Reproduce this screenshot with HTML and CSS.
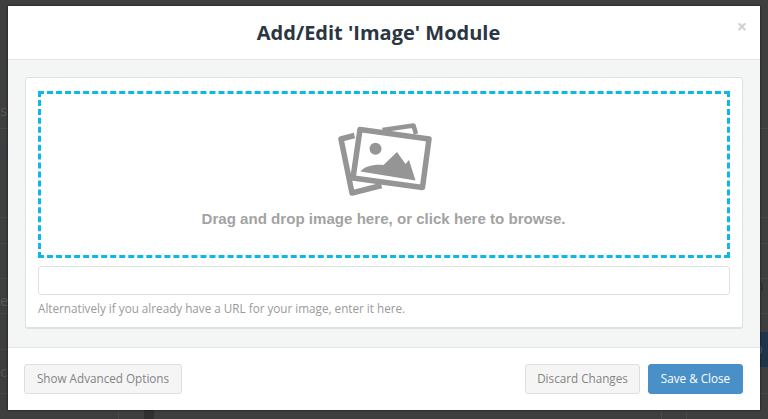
FILE: index.html
```html
<!DOCTYPE html>
<html lang="en">
<head>
  <meta charset="UTF-8">
  <title>Add/Edit 'Image' Module</title>
  <link rel="stylesheet" href="styles.css">
</head>
<body>
  <div class="backdrop">
    <i class="bg-line l1"></i>
    <i class="bg-line l2"></i>
    <i class="bg-line l3"></i>
    <i class="bg-line l4"></i>
    <i class="bg-line l5"></i>
    <i class="bg-line l6"></i>
    <i class="bg-line l7"></i>
    <i class="bg-col c1"></i>
    <i class="bg-col c2"></i>
    <i class="bg-col c3"></i>
    <i class="bg-col c4"></i>
    <span class="bg-text bg-s">s</span>
    <span class="bg-text bg-o">o</span>
    <span class="bg-text bg-e">e</span>
    <span class="bg-text bg-ca">ca</span>
    <span class="bg-text bg-m">m</span>
    <div class="bg-bar">D</div>
  </div>

  <div class="modal">
    <div class="modal-header">
      <h1>Add/Edit 'Image' Module</h1>
      <span class="close">×</span>
    </div>

    <div class="modal-body">
      <div class="card">
        <div class="dropzone">
          <svg class="drop-icon" viewBox="333.5 120 100 80" aria-hidden="true">
            <path class="photo" d="M354 135.500 L340.500 139 L351.500 193 L381 185.500"/>
            <path class="photo thin" d="M382 130 L413 125.500 L415.500 134"/>
            <path class="photo" d="M359.500 129.500 L428.500 139 L422 187.500 L352.500 178 Z"/>
            <circle class="fill" cx="375" cy="148.700" r="6"/>
            <path class="fill" d="M360 171.500 C364 166 374 164 383 165 L396.500 152 L405 164 L408.500 160 L415 180.500 Z"/>
          </svg>
          <p class="drop-text">Drag and drop image here, or click here to browse.</p>
        </div>
        <input class="url-input" type="text">
        <p class="help">Alternatively if you already have a URL for your image, enter it here.</p>
      </div>
    </div>

    <div class="modal-footer">
      <button class="btn">Show Advanced Options</button>
      <div class="footer-right">
        <button class="btn btn-discard">Discard Changes</button>
        <button class="btn btn-primary">Save &amp; Close</button>
      </div>
    </div>
  </div>
</body>
</html>
```

FILE: styles.css
```css
html, body {
  height: 100%;
}

body {
  margin: 0;
  overflow: hidden;
  background-color: #3e3e3e;
  font-family: "Open Sans", sans-serif;
  padding: 6px 8px 0;
  box-sizing: border-box;
}

.backdrop {
  position: absolute;
  top: 0;
  left: 0;
  width: 768px;
  height: 419px;
  overflow: hidden;
}

.bg-line {
  position: absolute;
  left: 0;
  width: 100%;
  height: 1px;
  background-color: #474747;
}

.l1 { top: 128px; }
.l2 { top: 217px; }
.l3 { top: 243px; }
.l4 { top: 278px; }
.l5 { top: 313px; }
.l6 { top: 349px; }
.l7 { top: 393px; }

.bg-col {
  position: absolute;
  top: 405px;
  width: 1px;
  height: 14px;
  background-color: #4a4a4a;
}

.c1 { left: 118px; }
.c2 { left: 144px; width: 10px; background-color: #303030; }
.c3 { left: 661px; }
.c4 { left: 686px; }

.bg-text {
  position: absolute;
  font-size: 15px;
  color: #555;
}

.bg-s { left: 0; top: 100px; }
.bg-o { left: -1px; top: 140px; color: #34404a; }
.bg-e { left: 0; top: 290px; }
.bg-ca { left: 0; top: 361px; }
.bg-m { left: 750px; top: 275px; color: #2e2e2e; }

.bg-bar {
  position: absolute;
  left: 752px;
  top: 332px;
  width: 16px;
  height: 35px;
  background-color: #1e3448;
  color: #4a5a68;
  font-size: 15px;
  line-height: 35px;
}

.modal {
  position: relative;
  width: 752px;
  height: 404px;
  display: flex;
  flex-direction: column;
  background-color: #fff;
  box-shadow: 0 0 2px rgba(0, 0, 0, 0.8);
}

.modal-header {
  position: relative;
  height: 53px;
  flex-shrink: 0;
  border-bottom: 1px solid #e5e8e8;
  text-align: center;
}

.modal-header h1 {
  margin: 0;
  padding-right: 11px;
  font-size: 20px;
  line-height: 53px;
  font-weight: 700;
  color: #2b3642;
}

.close {
  position: absolute;
  top: 8px;
  right: 13px;
  font-size: 18px;
  line-height: 24px;
  font-weight: 700;
  color: #d0d0d0;
}

.modal-body {
  flex: 1;
  padding: 17px 17px 18px;
  background-color: #f4f6f6;
  border-bottom: 1px solid #e5e8e8;
}

.card {
  height: 252px;
  box-sizing: border-box;
  padding: 12px;
  padding-top: 13px;
  background-color: #fff;
  border: 1px solid #dde2e2;
  border-bottom-width: 2px;
  border-radius: 3px;
}

.dropzone {
  height: 167px;
  box-sizing: border-box;
  padding-top: 26px;
  border: 3px dashed #0cb8e8;
  text-align: center;
}

.drop-icon {
  display: block;
  width: 100px;
  height: 80px;
  margin: 0 auto;
}

.photo {
  fill: none;
  stroke: #959595;
  stroke-width: 5.500;
  stroke-linejoin: round;
}

.photo.thin {
  stroke-width: 4.500;
}

.fill {
  fill: #959595;
}

.drop-text {
  margin: 10px 0 0;
  padding-right: 1px;
  font-family: "Liberation Sans", sans-serif;
  font-size: 15.100px;
  line-height: 17px;
  font-weight: 700;
  color: #a3a3a3;
}

.url-input {
  display: block;
  width: 100%;
  height: 29px;
  box-sizing: border-box;
  margin-top: 8px;
  border: 1px solid #dde2e2;
  border-radius: 3px;
  background-color: #fff;
}

.help {
  margin: 5px 0 0;
  font-size: 11.700px;
  line-height: 16px;
  color: #9a9a9a;
}

.modal-footer {
  height: 62px;
  flex-shrink: 0;
  box-sizing: border-box;
  padding: 16px 17px 16px 16px;
  display: flex;
  justify-content: space-between;
  align-items: flex-start;
}

.footer-right {
  display: flex;
  gap: 8px;
}

.btn {
  width: 158px;
  height: 30px;
  padding: 0 0 2px;
  font-family: "Open Sans", sans-serif;
  font-size: 11.700px;
  color: #848484;
  background-color: #f5f5f5;
  border: 1px solid #dcdfdf;
  border-radius: 3px;
}

.btn-discard {
  width: 115px;
}

.btn-primary {
  width: 95px;
  color: #fff;
  background-color: #4a90c8;
  border-color: #4a90c8;
}
```
